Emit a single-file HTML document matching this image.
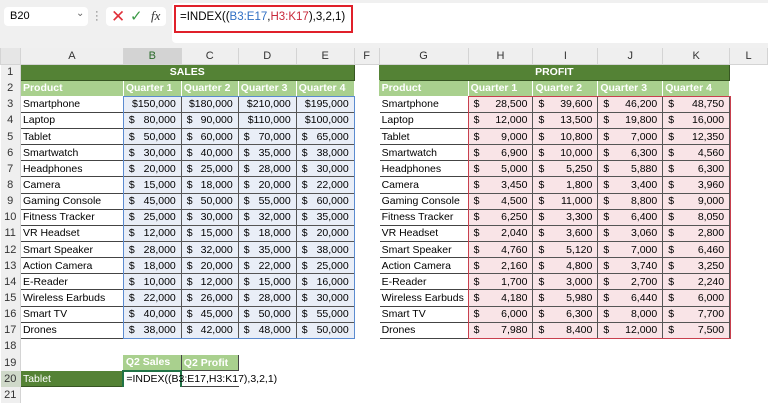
<!DOCTYPE html><html><head><style>
*{margin:0;padding:0;box-sizing:border-box}
body{width:768px;height:403px;overflow:hidden;background:#fff;font-family:"Liberation Sans",sans-serif;font-size:10.5px;color:#000;position:relative}
.top{position:absolute;left:0;top:0;width:768px;height:48px;background:#f0f0f0}
.nb{position:absolute;left:4px;top:7px;width:84px;height:19px;background:#fff;border-radius:4px;font-size:11px;padding:3px 0 0 6px}
.fb{position:absolute;left:106px;top:7px;width:60px;height:19px;background:#fff;border-radius:4px}
.fa{position:absolute;left:172px;top:3px;width:600px;height:40px;background:#fff;border-radius:4px 0 0 4px}
.red{position:absolute;left:174px;top:5px;width:179px;height:28px;border:2px solid #e0202a}
.ft{position:absolute;left:180px;top:11px;font-size:11.5px}
table{position:absolute;left:0;top:48px;border-collapse:collapse;table-layout:fixed}
td{height:16.15px;padding:0 2px;white-space:nowrap;overflow:visible;border:1px solid transparent;line-height:14px}
tr.h td{height:16px;background:#efefef;color:#333;text-align:center;border:1px solid #d4d4d4;border-top:none;font-size:11px}
td.rn{background:#efefef;color:#333;text-align:center;font-size:11px;border:none;border-right:1px solid #d4d4d4;padding:0}
.g1{background:#548235;color:#fff;font-weight:bold;text-align:center;border:1px solid #375623!important}
.g2{background:#a9d08e;color:#fff;font-weight:bold;border:1px solid #fff!important}
.p{border:1px solid #444!important}
.s{background:#e9eef7;border:1px solid #555!important}
.pr{background:#f9e4e7;border:1px solid #555!important}
.m{display:flex;justify-content:space-between;padding:0 3px}
.m span:last-child{margin-left:auto}
.sel{background:#cfd9c9!important;color:#1e5a1e}
</style></head><body>
<div class="top">
<div class="nb">B20<span style="position:absolute;left:72px;top:1px;color:#666;font-size:10px">⌄</span></div>
<div style="position:absolute;left:95px;top:10px;color:#666;font-size:11px;line-height:4px">·<br>·<br>·</div>
<div class="fb"><span style="position:absolute;left:5px;top:0;color:#e0303a;font-size:17px">✕</span><span style="position:absolute;left:24px;top:0;color:#3a9a45;font-size:15px">✓</span><span style="position:absolute;left:45px;top:1px;font-family:'Liberation Serif',serif;font-style:italic;font-size:13px;color:#333">fx</span></div>
<div class="fa"></div><div class="red"></div>
<div class="ft">=INDEX((<span style="color:#2f6fc4">B3:E17</span>,<span style="color:#c8283a">H3:K17</span>),3,2,1)</div>
</div>
<table>
<colgroup><col style="width:20px"><col style="width:103px"><col style="width:58px"><col style="width:57px"><col style="width:58px"><col style="width:58px"><col style="width:25px"><col style="width:89px"><col style="width:65px"><col style="width:65px"><col style="width:65px"><col style="width:67px"><col style="width:38px"></colgroup>
<tr class="h"><td style="background:#e6e6e6"></td><td>A</td><td style="background:#d3d3d3;color:#2a6a2a">B</td><td>C</td><td>D</td><td>E</td><td>F</td><td>G</td><td>H</td><td>I</td><td>J</td><td>K</td><td>L</td></tr>
<tr><td class="rn">1</td><td class="g1" colspan="5">SALES</td><td></td><td class="g1" colspan="5">PROFIT</td><td></td></tr>
<tr><td class="rn">2</td><td class="g2">Product</td><td class="g2">Quarter 1</td><td class="g2">Quarter 2</td><td class="g2">Quarter 3</td><td class="g2">Quarter 4</td><td></td><td class="g2">Product</td><td class="g2">Quarter 1</td><td class="g2">Quarter 2</td><td class="g2">Quarter 3</td><td class="g2">Quarter 4</td><td></td></tr>
<tr><td class="rn">3</td><td class="p">Smartphone</td><td class="s"><div class="m"><span>$150,000</span></div></td><td class="s"><div class="m"><span>$180,000</span></div></td><td class="s"><div class="m"><span>$210,000</span></div></td><td class="s"><div class="m"><span>$195,000</span></div></td><td></td><td class="p">Smartphone</td><td class="pr"><div class="m"><span>$</span><span>28,500</span></div></td><td class="pr"><div class="m"><span>$</span><span>39,600</span></div></td><td class="pr"><div class="m"><span>$</span><span>46,200</span></div></td><td class="pr"><div class="m"><span>$</span><span>48,750</span></div></td><td></td></tr>
<tr><td class="rn">4</td><td class="p">Laptop</td><td class="s"><div class="m"><span>$</span><span>80,000</span></div></td><td class="s"><div class="m"><span>$</span><span>90,000</span></div></td><td class="s"><div class="m"><span>$110,000</span></div></td><td class="s"><div class="m"><span>$100,000</span></div></td><td></td><td class="p">Laptop</td><td class="pr"><div class="m"><span>$</span><span>12,000</span></div></td><td class="pr"><div class="m"><span>$</span><span>13,500</span></div></td><td class="pr"><div class="m"><span>$</span><span>19,800</span></div></td><td class="pr"><div class="m"><span>$</span><span>16,000</span></div></td><td></td></tr>
<tr><td class="rn">5</td><td class="p">Tablet</td><td class="s"><div class="m"><span>$</span><span>50,000</span></div></td><td class="s"><div class="m"><span>$</span><span>60,000</span></div></td><td class="s"><div class="m"><span>$</span><span>70,000</span></div></td><td class="s"><div class="m"><span>$</span><span>65,000</span></div></td><td></td><td class="p">Tablet</td><td class="pr"><div class="m"><span>$</span><span>9,000</span></div></td><td class="pr"><div class="m"><span>$</span><span>10,800</span></div></td><td class="pr"><div class="m"><span>$</span><span>7,000</span></div></td><td class="pr"><div class="m"><span>$</span><span>12,350</span></div></td><td></td></tr>
<tr><td class="rn">6</td><td class="p">Smartwatch</td><td class="s"><div class="m"><span>$</span><span>30,000</span></div></td><td class="s"><div class="m"><span>$</span><span>40,000</span></div></td><td class="s"><div class="m"><span>$</span><span>35,000</span></div></td><td class="s"><div class="m"><span>$</span><span>38,000</span></div></td><td></td><td class="p">Smartwatch</td><td class="pr"><div class="m"><span>$</span><span>6,900</span></div></td><td class="pr"><div class="m"><span>$</span><span>10,000</span></div></td><td class="pr"><div class="m"><span>$</span><span>6,300</span></div></td><td class="pr"><div class="m"><span>$</span><span>4,560</span></div></td><td></td></tr>
<tr><td class="rn">7</td><td class="p">Headphones</td><td class="s"><div class="m"><span>$</span><span>20,000</span></div></td><td class="s"><div class="m"><span>$</span><span>25,000</span></div></td><td class="s"><div class="m"><span>$</span><span>28,000</span></div></td><td class="s"><div class="m"><span>$</span><span>30,000</span></div></td><td></td><td class="p">Headphones</td><td class="pr"><div class="m"><span>$</span><span>5,000</span></div></td><td class="pr"><div class="m"><span>$</span><span>5,250</span></div></td><td class="pr"><div class="m"><span>$</span><span>5,880</span></div></td><td class="pr"><div class="m"><span>$</span><span>6,300</span></div></td><td></td></tr>
<tr><td class="rn">8</td><td class="p">Camera</td><td class="s"><div class="m"><span>$</span><span>15,000</span></div></td><td class="s"><div class="m"><span>$</span><span>18,000</span></div></td><td class="s"><div class="m"><span>$</span><span>20,000</span></div></td><td class="s"><div class="m"><span>$</span><span>22,000</span></div></td><td></td><td class="p">Camera</td><td class="pr"><div class="m"><span>$</span><span>3,450</span></div></td><td class="pr"><div class="m"><span>$</span><span>1,800</span></div></td><td class="pr"><div class="m"><span>$</span><span>3,400</span></div></td><td class="pr"><div class="m"><span>$</span><span>3,960</span></div></td><td></td></tr>
<tr><td class="rn">9</td><td class="p">Gaming Console</td><td class="s"><div class="m"><span>$</span><span>45,000</span></div></td><td class="s"><div class="m"><span>$</span><span>50,000</span></div></td><td class="s"><div class="m"><span>$</span><span>55,000</span></div></td><td class="s"><div class="m"><span>$</span><span>60,000</span></div></td><td></td><td class="p">Gaming Console</td><td class="pr"><div class="m"><span>$</span><span>4,500</span></div></td><td class="pr"><div class="m"><span>$</span><span>11,000</span></div></td><td class="pr"><div class="m"><span>$</span><span>8,800</span></div></td><td class="pr"><div class="m"><span>$</span><span>9,000</span></div></td><td></td></tr>
<tr><td class="rn">10</td><td class="p">Fitness Tracker</td><td class="s"><div class="m"><span>$</span><span>25,000</span></div></td><td class="s"><div class="m"><span>$</span><span>30,000</span></div></td><td class="s"><div class="m"><span>$</span><span>32,000</span></div></td><td class="s"><div class="m"><span>$</span><span>35,000</span></div></td><td></td><td class="p">Fitness Tracker</td><td class="pr"><div class="m"><span>$</span><span>6,250</span></div></td><td class="pr"><div class="m"><span>$</span><span>3,300</span></div></td><td class="pr"><div class="m"><span>$</span><span>6,400</span></div></td><td class="pr"><div class="m"><span>$</span><span>8,050</span></div></td><td></td></tr>
<tr><td class="rn">11</td><td class="p">VR Headset</td><td class="s"><div class="m"><span>$</span><span>12,000</span></div></td><td class="s"><div class="m"><span>$</span><span>15,000</span></div></td><td class="s"><div class="m"><span>$</span><span>18,000</span></div></td><td class="s"><div class="m"><span>$</span><span>20,000</span></div></td><td></td><td class="p">VR Headset</td><td class="pr"><div class="m"><span>$</span><span>2,040</span></div></td><td class="pr"><div class="m"><span>$</span><span>3,600</span></div></td><td class="pr"><div class="m"><span>$</span><span>3,060</span></div></td><td class="pr"><div class="m"><span>$</span><span>2,800</span></div></td><td></td></tr>
<tr><td class="rn">12</td><td class="p">Smart Speaker</td><td class="s"><div class="m"><span>$</span><span>28,000</span></div></td><td class="s"><div class="m"><span>$</span><span>32,000</span></div></td><td class="s"><div class="m"><span>$</span><span>35,000</span></div></td><td class="s"><div class="m"><span>$</span><span>38,000</span></div></td><td></td><td class="p">Smart Speaker</td><td class="pr"><div class="m"><span>$</span><span>4,760</span></div></td><td class="pr"><div class="m"><span>$</span><span>5,120</span></div></td><td class="pr"><div class="m"><span>$</span><span>7,000</span></div></td><td class="pr"><div class="m"><span>$</span><span>6,460</span></div></td><td></td></tr>
<tr><td class="rn">13</td><td class="p">Action Camera</td><td class="s"><div class="m"><span>$</span><span>18,000</span></div></td><td class="s"><div class="m"><span>$</span><span>20,000</span></div></td><td class="s"><div class="m"><span>$</span><span>22,000</span></div></td><td class="s"><div class="m"><span>$</span><span>25,000</span></div></td><td></td><td class="p">Action Camera</td><td class="pr"><div class="m"><span>$</span><span>2,160</span></div></td><td class="pr"><div class="m"><span>$</span><span>4,800</span></div></td><td class="pr"><div class="m"><span>$</span><span>3,740</span></div></td><td class="pr"><div class="m"><span>$</span><span>3,250</span></div></td><td></td></tr>
<tr><td class="rn">14</td><td class="p">E-Reader</td><td class="s"><div class="m"><span>$</span><span>10,000</span></div></td><td class="s"><div class="m"><span>$</span><span>12,000</span></div></td><td class="s"><div class="m"><span>$</span><span>15,000</span></div></td><td class="s"><div class="m"><span>$</span><span>16,000</span></div></td><td></td><td class="p">E-Reader</td><td class="pr"><div class="m"><span>$</span><span>1,700</span></div></td><td class="pr"><div class="m"><span>$</span><span>3,000</span></div></td><td class="pr"><div class="m"><span>$</span><span>2,700</span></div></td><td class="pr"><div class="m"><span>$</span><span>2,240</span></div></td><td></td></tr>
<tr><td class="rn">15</td><td class="p">Wireless Earbuds</td><td class="s"><div class="m"><span>$</span><span>22,000</span></div></td><td class="s"><div class="m"><span>$</span><span>26,000</span></div></td><td class="s"><div class="m"><span>$</span><span>28,000</span></div></td><td class="s"><div class="m"><span>$</span><span>30,000</span></div></td><td></td><td class="p">Wireless Earbuds</td><td class="pr"><div class="m"><span>$</span><span>4,180</span></div></td><td class="pr"><div class="m"><span>$</span><span>5,980</span></div></td><td class="pr"><div class="m"><span>$</span><span>6,440</span></div></td><td class="pr"><div class="m"><span>$</span><span>6,000</span></div></td><td></td></tr>
<tr><td class="rn">16</td><td class="p">Smart TV</td><td class="s"><div class="m"><span>$</span><span>40,000</span></div></td><td class="s"><div class="m"><span>$</span><span>45,000</span></div></td><td class="s"><div class="m"><span>$</span><span>50,000</span></div></td><td class="s"><div class="m"><span>$</span><span>55,000</span></div></td><td></td><td class="p">Smart TV</td><td class="pr"><div class="m"><span>$</span><span>6,000</span></div></td><td class="pr"><div class="m"><span>$</span><span>6,300</span></div></td><td class="pr"><div class="m"><span>$</span><span>8,000</span></div></td><td class="pr"><div class="m"><span>$</span><span>7,700</span></div></td><td></td></tr>
<tr><td class="rn">17</td><td class="p">Drones</td><td class="s"><div class="m"><span>$</span><span>38,000</span></div></td><td class="s"><div class="m"><span>$</span><span>42,000</span></div></td><td class="s"><div class="m"><span>$</span><span>48,000</span></div></td><td class="s"><div class="m"><span>$</span><span>50,000</span></div></td><td></td><td class="p">Drones</td><td class="pr"><div class="m"><span>$</span><span>7,980</span></div></td><td class="pr"><div class="m"><span>$</span><span>8,400</span></div></td><td class="pr"><div class="m"><span>$</span><span>12,000</span></div></td><td class="pr"><div class="m"><span>$</span><span>7,500</span></div></td><td></td></tr>
<tr><td class="rn">18</td><td colspan="12"></td></tr>
<tr><td class="rn">19</td><td></td><td class="g2" style="border:1px solid #444!important">Q2 Sales</td><td class="g2" style="border:1px solid #444!important">Q2 Profit</td><td colspan="9"></td></tr>
<tr><td class="rn sel">20</td><td style="background:#548235;color:#fff;border:1px solid #375623">Tablet</td><td style="border:2px solid #217346;border-bottom:none;overflow:visible;position:relative"><span style="position:absolute;left:2px;top:0">=INDEX((B3:E17,H3:K17),3,2,1)</span></td><td style="border-bottom:1px solid #444"></td><td colspan="9"></td></tr>
<tr><td class="rn">21</td><td colspan="12"></td></tr>
</table>
<div style="position:absolute;left:123px;top:96px;width:232px;height:243px;border:1.5px solid #5b8bd0;pointer-events:none"></div>
<div style="position:absolute;left:468px;top:96px;width:263px;height:243px;border:1.5px solid #c8404e;pointer-events:none"></div>
</body></html>
